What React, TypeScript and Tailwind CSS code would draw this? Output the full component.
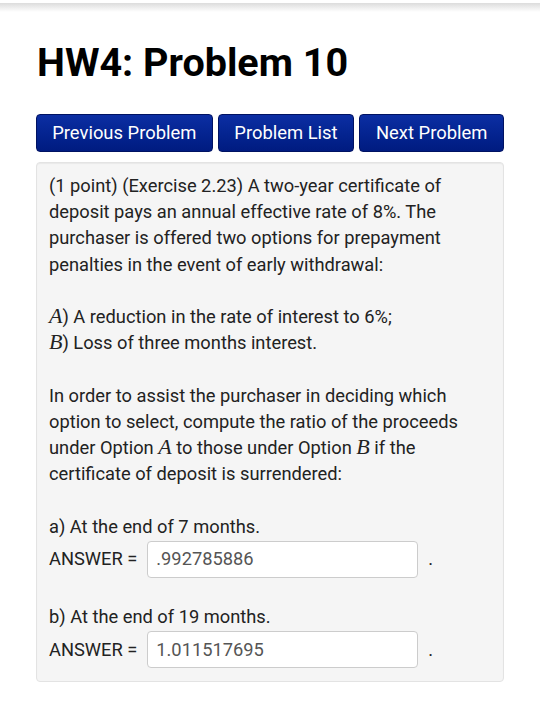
import React from 'react';

const roboto = { fontFamily: 'Roboto, "Noto Sans", sans-serif' };

const MathVar = ({ v }: { v: string }) => (
  <span className="italic text-[22px] leading-none font-['Liberation_Serif',serif]">{v}</span>
);

const NavButton = ({ label, className = '' }: { label: string; className?: string }) => (
  <button
    className={`h-[38px] rounded-[4px] border border-[#001262] bg-gradient-to-b from-[#0c2ea3] to-[#001b80] text-white text-[18.4px] px-[12px] ${className}`}
  >
    {label}
  </button>
);

const AnswerRow = ({ value }: { value: string }) => (
  <div className="flex items-center mt-[1px]">
    <span className="mr-[10px]">ANSWER =</span>
    <div className="w-[271px] h-[37px] bg-white border border-[#cccccc] rounded-[4px] px-[8px] flex items-center text-[#555555]">
      {value}
    </div>
    <span className="ml-[10px]">.</span>
  </div>
);

export default function App() {
  return (
    <div className="min-h-screen bg-white text-[#222222]" style={roboto}>
      <div className="h-[3px] bg-white" />
      <div className="h-[9px] bg-gradient-to-b from-[#dcdcdc] to-white" />
      <div className="px-[36px]">
        <h1 className="text-[39.5px] font-bold text-black mt-[26px] leading-[50px] pl-[1px]">HW4: Problem 10</h1>
        <div className="flex gap-[5px] mt-[26px]">
          <NavButton label="Previous Problem" className="w-[177px]" />
          <NavButton label="Problem List" className="w-[137px]" />
          <NavButton label="Next Problem" className="w-[145px]" />
        </div>
        <div className="mt-[10px] bg-[#f5f5f5] border border-[#e3e3e3] rounded-[4px] shadow-[inset_0_1px_1px_rgba(0,0,0,0.05)] px-[12px] pt-[10px] pb-[13px] text-[18.3px] leading-[26.2px]">
          <p className="pr-[20px]">
            (1 point) (Exercise 2.23) A two-year certificate of deposit pays an annual effective rate of 8%. The
            purchaser is offered two options for prepayment penalties in the event of early withdrawal:
          </p>
          <br />
          <p>
            <MathVar v="A" />) A reduction in the rate of interest to 6%;
            <br />
            <MathVar v="B" />) Loss of three months interest.
          </p>
          <br />
          <p>
            In order to assist the purchaser in deciding which option to select, compute the ratio of the proceeds
            under Option <MathVar v="A" /> to those under Option <MathVar v="B" /> if the certificate of deposit is
            surrendered:
          </p>
          <br />
          <p>a) At the end of 7 months.</p>
          <AnswerRow value=".992785886" />
          <br />
          <p>b) At the end of 19 months.</p>
          <AnswerRow value="1.011517695" />
        </div>
      </div>
    </div>
  );
}
